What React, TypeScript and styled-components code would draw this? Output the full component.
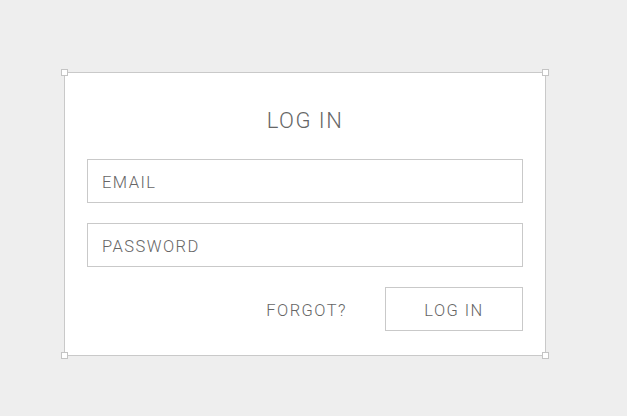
import React from "react";
import styled, { createGlobalStyle } from "styled-components";

const Global = createGlobalStyle`
  html, body { margin: 0; padding: 0; background: #eeeeee; }
  body { font-family: Roboto, "Liberation Sans", sans-serif; }
`;

const Page = styled.div`
  min-height: 416px;
  padding: 72px 0 0 64px;
  box-sizing: border-box;
`;

const Card = styled.form`
  position: relative;
  width: 482px;
  box-sizing: border-box;
  background: #ffffff;
  border: 1px solid #c9c9c9;
  padding: 35px 22px 24px;
  display: flex;
  flex-direction: column;
`;

const Handle = styled.span<{ $x: "left" | "right"; $y: "top" | "bottom" }>`
  position: absolute;
  width: 5px;
  height: 5px;
  background: #ffffff;
  border: 1px solid #c4c4c4;
  ${(p) => (p.$x === "left" ? "left: -4px;" : "right: -4px;")}
  ${(p) => (p.$y === "top" ? "top: -4px;" : "bottom: -4px;")}
`;

const Title = styled.h1`
  margin: 0 0 25px;
  font-size: 22px;
  line-height: 26px;
  font-weight: 300;
  letter-spacing: 1.5px;
  color: #666666;
  text-align: center;
`;

const Field = styled.input`
  display: block;
  height: 44px;
  box-sizing: border-box;
  margin: 0 0 20px;
  padding: 2px 14px 0;
  border: 1px solid #c9c9c9;
  border-radius: 0;
  background: #ffffff;
  font-family: Roboto, "Liberation Sans", sans-serif;
  font-size: 16.5px;
  font-weight: 300;
  letter-spacing: 1.45px;
  color: #666666;
  outline: none;
  &::placeholder { color: #666666; opacity: 1; }
`;

const Actions = styled.div`
  display: flex;
  align-items: center;
  justify-content: flex-end;
  gap: 38px;
`;

const Link = styled.a`
  font-size: 16.5px;
  font-weight: 300;
  letter-spacing: 1.45px;
  color: #666666;
  text-decoration: none;
  padding-top: 2px;
`;

const Button = styled.button`
  width: 138px;
  height: 44px;
  box-sizing: border-box;
  border: 1px solid #c9c9c9;
  background: #ffffff;
  font-family: Roboto, "Liberation Sans", sans-serif;
  font-size: 16.5px;
  font-weight: 300;
  letter-spacing: 1.45px;
  color: #666666;
  padding: 2px 0 0;
  cursor: pointer;
`;

export default function App() {
  return (
    <>
      <Global />
      <Page>
        <Card onSubmit={(e) => e.preventDefault()}>
          <Handle $x="left" $y="top" />
          <Handle $x="right" $y="top" />
          <Handle $x="left" $y="bottom" />
          <Handle $x="right" $y="bottom" />
          <Title>LOG IN</Title>
          <Field type="email" placeholder="EMAIL" />
          <Field type="password" placeholder="PASSWORD" />
          <Actions>
            <Link href="#">FORGOT?</Link>
            <Button type="submit">LOG IN</Button>
          </Actions>
        </Card>
      </Page>
    </>
  );
}
